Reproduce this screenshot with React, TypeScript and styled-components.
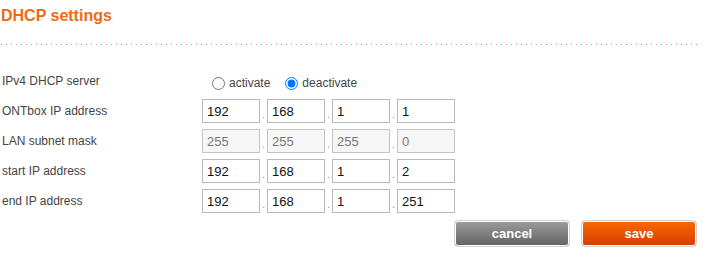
import React from 'react'
import styled, { createGlobalStyle } from 'styled-components'

const GlobalStyle = createGlobalStyle`
    body {
        margin: 0;
        background: #fff;
        font-family: Arial, 'Liberation Sans', sans-serif;
    }
`

const rows = [
    { label: 'ONTbox IP address', values: ['192', '168', '1', '1'], disabled: false },
    { label: 'LAN subnet mask', values: ['255', '255', '255', '0'], disabled: true },
    { label: 'start IP address', values: ['192', '168', '1', '2'], disabled: false },
    { label: 'end IP address', values: ['192', '168', '1', '251'], disabled: false },
]

const App = () => {
    return (
        <>
            <GlobalStyle />
            <Page>
                <Title>DHCP settings</Title>
                <Divider />
                <Form>
                    <Row>
                        <Label>IPv4 DHCP server</Label>
                        <RadioGroup>
                            <RadioLabel>
                                <Radio type="radio" name="dhcp" />
                                activate
                            </RadioLabel>
                            <RadioLabel>
                                <Radio type="radio" name="dhcp" defaultChecked />
                                deactivate
                            </RadioLabel>
                        </RadioGroup>
                    </Row>
                    {rows.map((row) => (
                        <Row key={row.label}>
                            <Label>{row.label}</Label>
                            <IpGroup>
                                {row.values.map((v, i) => (
                                    <React.Fragment key={i}>
                                        {i > 0 && <Dot>.</Dot>}
                                        <Octet defaultValue={v} disabled={row.disabled} />
                                    </React.Fragment>
                                ))}
                            </IpGroup>
                        </Row>
                    ))}
                </Form>
                <Actions>
                    <Button $variant="cancel">cancel</Button>
                    <Button $variant="save">save</Button>
                </Actions>
            </Page>
        </>
    )
}

export default App

const Page = styled.div`
    width: 696px;
    padding: 7px 0 0 1px;
`

const Title = styled.h2`
    margin: 0;
    font-size: 16px;
    line-height: 18px;
    font-weight: bold;
    color: #f26a0f;
`

const Divider = styled.div`
    margin-top: 19px;
    height: 1px;
    background-image: linear-gradient(to right, #ee8c44 1px, transparent 1px);
    background-size: 5px 1px;
    background-repeat: repeat-x;
`

const Form = styled.div`
    margin-top: 24px;
    display: flex;
    flex-direction: column;
    gap: 6px;
`

const Row = styled.div`
    display: flex;
    align-items: center;
    height: 24px;
`

const Label = styled.div`
    width: 200px;
    padding-left: 1px;
    font-size: 12px;
    color: #444;
`

const RadioGroup = styled.div`
    display: flex;
    align-items: center;
    gap: 10px;
    padding-top: 4px;
    padding-left: 5px;
`

const RadioLabel = styled.label`
    display: flex;
    align-items: center;
    font-size: 12px;
    color: #444;
`

const Radio = styled.input`
    width: 13px;
    height: 13px;
    margin: 0 4px 0 5px;
`

const IpGroup = styled.div`
    display: flex;
    align-items: stretch;
    height: 24px;
`

const Octet = styled.input`
    box-sizing: border-box;
    width: 58px;
    height: 24px;
    margin: 0;
    padding: 0 0 0 4px;
    border: 1px solid #b9b9b9;
    font-family: Arial, 'Liberation Sans', sans-serif;
    font-size: 13px;
    color: #111;
    background: #fff;
    outline: none;

    &:disabled {
        background: #f6f6f6;
        color: #777;
        border-color: #c4c4c4;
    }
`

const Dot = styled.span`
    width: 7px;
    display: flex;
    align-items: flex-end;
    justify-content: center;
    font-size: 11px;
    line-height: 18px;
    color: #999;
`

const Button = styled.button<{ $variant: 'cancel' | 'save' }>`
    box-sizing: border-box;
    width: 116px;
    height: 27px;
    padding: 0;
    border: 1px solid #d2d2d2;
    border-radius: 4px;
    box-shadow: inset 0 0 0 1px #fff;
    font-family: Arial, 'Liberation Sans', sans-serif;
    font-size: 13px;
    font-weight: bold;
    color: #fff;
    cursor: pointer;
    background: ${(p) =>
        p.$variant === 'save'
            ? 'linear-gradient(to bottom, #f86a00, #d63c00)'
            : 'linear-gradient(to bottom, #9c9c9c, #626262)'};
`

const Actions = styled.div`
    display: flex;
    justify-content: flex-end;
    gap: 11px;
    margin-top: 7px;
`
